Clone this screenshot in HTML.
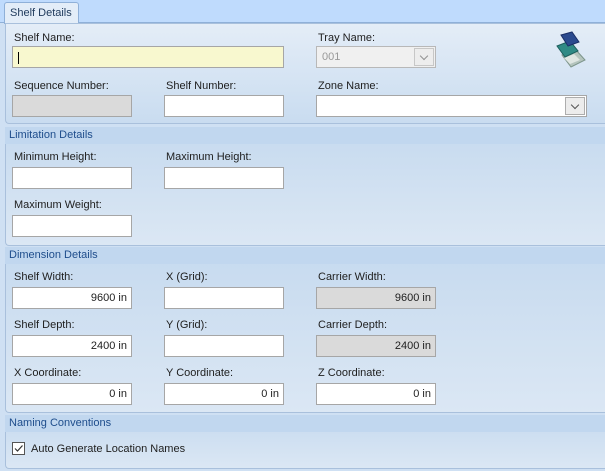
<!DOCTYPE html><html><head><style>
*{margin:0;padding:0;box-sizing:border-box}
body{width:605px;height:471px;overflow:hidden;background:#cfe0f3;font-family:"Liberation Sans",sans-serif;font-size:11px;color:#1e1e1e;position:relative}
.a{position:absolute}
.tabbar{left:0;top:0;width:605px;height:23px;background:#bfdbfd;border-bottom:1px solid #8fb0d8}
.tab{left:4px;top:2px;width:75px;height:22px;background:#e3edf8;border:1px solid #8fb0d8;border-bottom:none;border-radius:3px 3px 0 0;padding:4px 0 0 5px;font-size:11px;color:#1e395b}
.grp{left:5px;width:600px;border:1px solid #a9c0dc;border-right:none;border-radius:0 0 0 4px;background:linear-gradient(#c6daef,#dbe7f4)}
.hdr{left:5px;width:600px;height:17px;background:#c1d7ef;color:#1e4d8c;padding:2px 0 0 4px;font-size:11px}
.l{font-size:11px}
.i{height:22px;width:120px;background:#fff;border:1px solid #a6a6a6;text-align:right;padding:4px 4px 0 0;font-size:11px}
.d{background:#dadada}
.dd{width:20px;height:18px;border:1px solid #adadad;background:#ececec;top:1px;right:1px}
.dd::after{content:"";position:absolute;left:6px;top:4px;width:5px;height:5px;border-right:1px solid #555;border-bottom:1px solid #555;transform:rotate(45deg)}
</style></head><body>
<div class="a tabbar"></div>
<div class="a tab">Shelf Details</div>
<div class="a grp" style="top:23px;height:101px;background:linear-gradient(#e4edf7,#c9dcf0)"></div>
<div class="a grp" style="top:127px;height:119px"></div>
<div class="a hdr" style="top:127px">Limitation Details</div>
<div class="a grp" style="top:247px;height:166px"></div>
<div class="a hdr" style="top:247px">Dimension Details</div>
<div class="a grp" style="top:415px;height:54px"></div>
<div class="a hdr" style="top:415px">Naming Conventions</div>

<div class="a l" style="left:14px;top:32px">Shelf Name:</div>
<div class="a i" style="left:12px;top:46px;width:272px;background:#f8f8cf"><div class="a" style="left:5px;top:5px;width:1px;height:12px;background:#000"></div></div>
<div class="a l" style="left:318px;top:32px">Tray Name:</div>
<div class="a i" style="left:316px;top:46px;background:#f0f0f0;border-color:#b8b8b8;text-align:left;padding-left:5px;color:#999">001<div class="a dd" style="opacity:.6"></div></div>
<svg class="a" style="left:552px;top:31px" width="34" height="40" viewBox="0 0 34 40">
<polygon points="10,24 24,19 33,29 19,36" fill="#b4c4bd" stroke="#7d958b"/>
<polygon points="12,27 22,23 28,29 18,33" fill="#dfe6e2"/>
<polygon points="5,15 18,10 26,20 13,26" fill="#2f8a85" stroke="#1d5e5c"/>
<polygon points="9,4 20,1 27,11 16,15" fill="#2a4a8e" stroke="#1a2f66"/>
</svg>
<div class="a l" style="left:14px;top:80px">Sequence Number:</div>
<div class="a i d" style="left:12px;top:95px"></div>
<div class="a l" style="left:166px;top:80px">Shelf Number:</div>
<div class="a i" style="left:164px;top:95px"></div>
<div class="a l" style="left:318px;top:80px">Zone Name:</div>
<div class="a i" style="left:316px;top:95px;width:271px"><div class="a dd"></div></div>

<div class="a l" style="left:14px;top:151px">Minimum Height:</div>
<div class="a i" style="left:12px;top:167px"></div>
<div class="a l" style="left:166px;top:151px">Maximum Height:</div>
<div class="a i" style="left:164px;top:167px"></div>
<div class="a l" style="left:14px;top:199px">Maximum Weight:</div>
<div class="a i" style="left:12px;top:215px"></div>

<div class="a l" style="left:14px;top:271px">Shelf Width:</div>
<div class="a i" style="left:12px;top:287px">9600 in</div>
<div class="a l" style="left:166px;top:271px">X (Grid):</div>
<div class="a i" style="left:164px;top:287px"></div>
<div class="a l" style="left:318px;top:271px">Carrier Width:</div>
<div class="a i d" style="left:316px;top:287px">9600 in</div>
<div class="a l" style="left:14px;top:319px">Shelf Depth:</div>
<div class="a i" style="left:12px;top:335px">2400 in</div>
<div class="a l" style="left:166px;top:319px">Y (Grid):</div>
<div class="a i" style="left:164px;top:335px"></div>
<div class="a l" style="left:318px;top:319px">Carrier Depth:</div>
<div class="a i d" style="left:316px;top:335px">2400 in</div>
<div class="a l" style="left:14px;top:367px">X Coordinate:</div>
<div class="a i" style="left:12px;top:383px">0 in</div>
<div class="a l" style="left:166px;top:367px">Y Coordinate:</div>
<div class="a i" style="left:164px;top:383px">0 in</div>
<div class="a l" style="left:318px;top:367px">Z Coordinate:</div>
<div class="a i" style="left:316px;top:383px">0 in</div>

<div class="a" style="left:12px;top:442px;width:13px;height:13px;border:1px solid #555;background:#fff"><svg width="11" height="11" style="position:absolute;left:0;top:0"><path d="M2 5.5 L4.5 8 L9.5 2.5" fill="none" stroke="#333" stroke-width="1.2"/></svg></div>
<div class="a l" style="left:31px;top:443px">Auto Generate Location Names</div>
</body></html>
